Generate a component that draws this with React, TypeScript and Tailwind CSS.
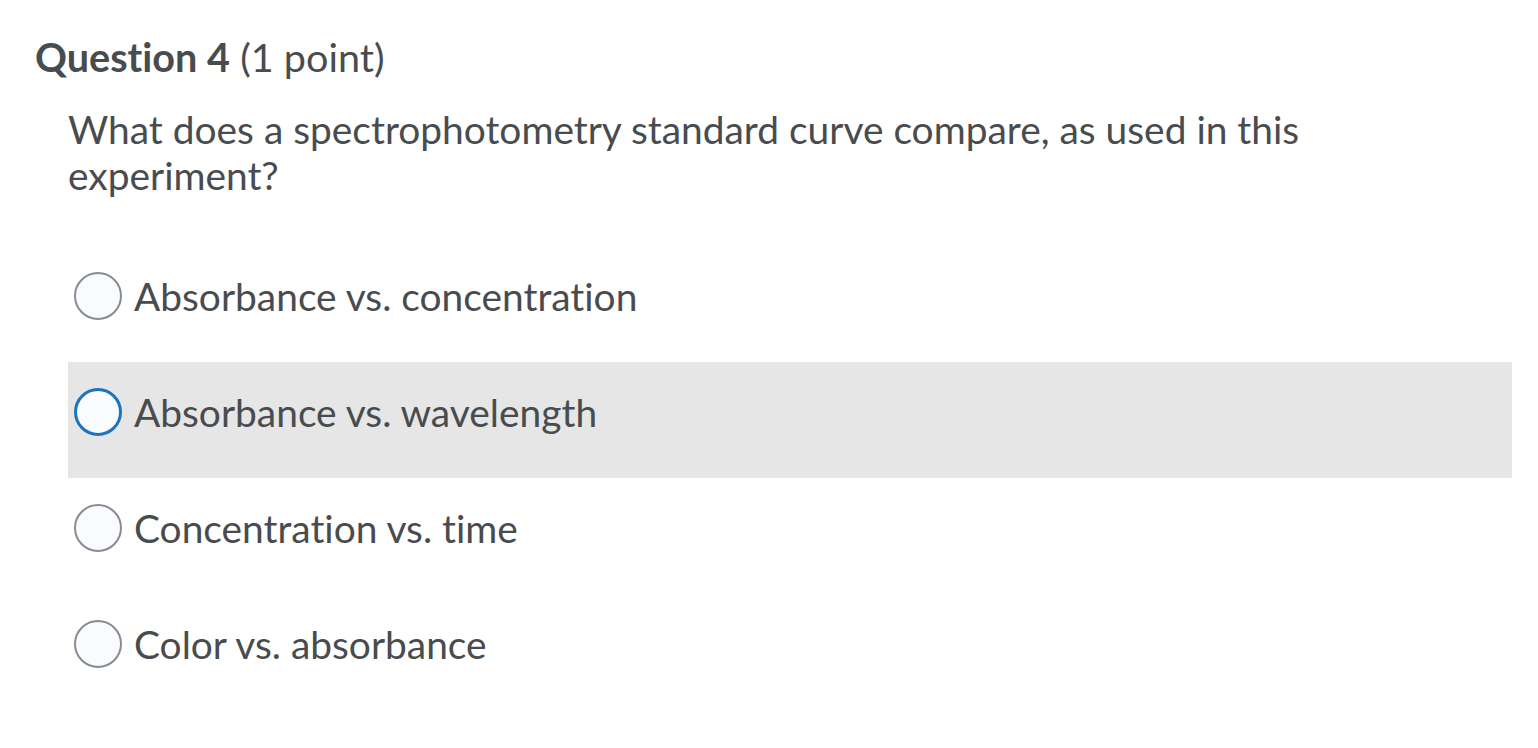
import React from "react";

const options = [
  "Absorbance vs. concentration",
  "Absorbance vs. wavelength",
  "Concentration vs. time",
  "Color vs. absorbance",
];

export default function App() {
  return (
    <div className="w-[1538px] h-[748px] bg-white text-[#494c4e] [font-variant-ligatures:none]" style={{ fontFamily: "Lato, 'Open Sans', sans-serif" }}>
      <div className="pl-[35px] pt-[34px]">
        <h2 className="text-[39.6px] leading-[46px]">
          <span className="font-bold">Question 4</span> <span>(1 point)</span>
        </h2>
      </div>
      <div className="pl-[68px] pr-[26px]">
        <p className="mt-[26px] text-[38.9px] leading-[46px] w-[1300px]">
          What does a spectrophotometry standard curve compare, as used in this experiment?
        </p>
        <div className="mt-[48px] flex flex-col">
          {options.map((o, i) => (
            <div key={o} className={`h-[116px] flex items-start pt-[26px] gap-[12px] pl-[6px] ${i === 1 ? "bg-[#e6e6e6]" : ""}`}>
              <div className={`w-[48px] h-[48px] rounded-full bg-[#f9fbff] ${i === 1 ? "border-[3px] border-[#1c74c0]" : "border-2 border-[#868c91]"}`} />
              <span className="text-[38.9px] leading-[48px]">{o}</span>
            </div>
          ))}
        </div>
      </div>
    </div>
  );
}
